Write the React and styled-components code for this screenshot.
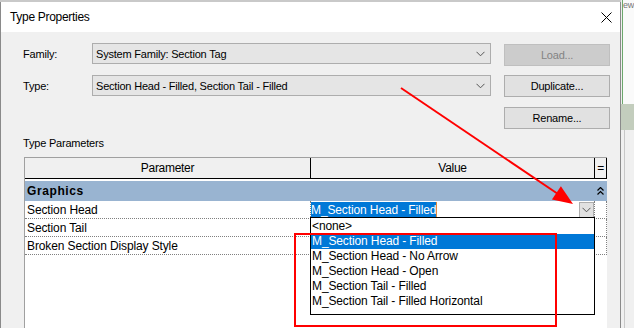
import styled, { createGlobalStyle } from 'styled-components';

const GlobalStyle = createGlobalStyle`
  html, body {
    margin: 0;
    padding: 0;
    background: #f0f0f0;
  }
  body {
    font-family: "Liberation Sans", Arial, sans-serif;
    font-size: 11px;
    letter-spacing: -0.2px;
    color: #000;
  }
`;

const Page = styled.div`
  position: relative;
  width: 634px;
  height: 328px;
  overflow: hidden;
  display: flex;
  background: #c9c9c9;
`;

const Dialog = styled.div`
  width: 622px;
  margin-top: 2px;
  box-sizing: border-box;
  border-left: 1px solid #8a8a8a;
  border-right: 1px solid #8a8a8a;
  display: flex;
  flex-direction: column;
`;

const TitleBar = styled.div`
  height: 30px;
  flex: none;
  background: #fff;
  display: flex;
  align-items: center;
  justify-content: space-between;
  padding: 0 8px 0 9px;
`;

const Title = styled.span`
  font-size: 12px;
  letter-spacing: -0.3px;
  color: #000;
`;

const Body = styled.div`
  flex: 1;
  background: #f0f0f0;
  padding: 11px 0 0 22px;
  display: flex;
  flex-direction: column;
`;

const FormGrid = styled.div`
  display: grid;
  grid-template-columns: 69px 412px 106px;
  grid-auto-rows: 22px;
  row-gap: 10px;
  align-items: center;
`;

const Label = styled.span`
  color: #000;
`;

const Combo = styled.div`
  width: 399px;
  height: 21px;
  box-sizing: border-box;
  border: 1px solid #adadad;
  background: #e5e5e5;
  display: flex;
  align-items: center;
  justify-content: space-between;
  padding: 0 5px 0 3px;
  align-self: start;
`;

const Button = styled.div`
  height: 22px;
  box-sizing: border-box;
  border: 1px solid ${(p) => (p.disabled ? '#bfbfbf' : '#adadad')};
  background: ${(p) => (p.disabled ? '#cccccc' : '#e1e1e1')};
  color: ${(p) => (p.disabled ? '#838383' : '#000')};
  display: flex;
  align-items: center;
  justify-content: center;
  margin-top: ${(p) => p.offset || 0}px;
`;

const SectionLabel = styled.div`
  margin-top: 7px;
  height: 14px;
  line-height: 14px;
`;

const Table = styled.div`
  position: relative;
  margin: 7px 0 0 1px;
  width: 583px;
  flex: 1;
  box-sizing: border-box;
  border-left: 1px solid #a0a0a0;
  border-top: 1px solid #a0a0a0;
  background: #fff;
  font-size: 12px;
  letter-spacing: -0.12px;
`;

const GridRow = styled.div`
  display: grid;
  grid-template-columns: 286px 284px 12px;
  height: ${(p) => p.h}px;
  box-sizing: border-box;
`;

const HeaderRow = styled(GridRow)`
  background: #f0f0f0;
  border-bottom: 1px solid #000;
  letter-spacing: -0.3px;
`;

const HeadCell = styled.div`
  border-right: 1px solid #000;
  display: flex;
  align-items: center;
  justify-content: center;
`;

const Band = styled(GridRow)`
  margin-top: 2px;
  background: #99b4d1;
  align-items: center;
`;

const BandTitle = styled.span`
  grid-column: 1 / 3;
  font-weight: bold;
  letter-spacing: 0.6px;
  padding-left: 2px;
`;

const IconCell = styled.div`
  display: flex;
  align-items: center;
  justify-content: center;
  height: 100%;
  padding-right: 2px;
`;

const ParamCell = styled.div`
  border-right: 1px dotted #808080;
  border-bottom: 1px dotted #808080;
  padding-left: 2px;
  display: flex;
  align-items: center;
`;

const ValueCell = styled.div`
  border-bottom: 1px dotted #808080;
  display: flex;
  align-items: center;
  justify-content: space-between;
  padding-right: 1px;
`;

const EqCell = styled.div`
  border-left: 1px dotted #808080;
  border-right: 1px dotted #808080;
  border-bottom: 1px dotted #808080;
  margin-left: -1px;
`;

const Selected = styled.span`
  background: #0078d7;
  color: #fff;
  height: 16px;
  line-height: 16px;
  border-right: 1px solid #e08a3c;
`;

const DropButton = styled.div`
  width: 15px;
  height: 16px;
  box-sizing: border-box;
  border: 1px solid #adadad;
  background: #e1e1e1;
  display: flex;
  align-items: center;
  justify-content: center;
`;

const List = styled.div`
  position: absolute;
  left: 285px;
  top: 59px;
  width: 285px;
  height: 98px;
  box-sizing: border-box;
  border: 1px solid #000;
  background: #fff;
  padding-top: 1px;
`;

const ListItem = styled.div`
  height: 15px;
  line-height: 15px;
  padding-left: 1px;
  background: ${(p) => (p.active ? '#0078d7' : 'transparent')};
  color: ${(p) => (p.active ? '#fff' : '#000')};
`;

const Backdrop = styled.div`
  flex: 1;
  display: flex;
  flex-direction: column;
  background: #f0f0f0;
`;

const BackTop = styled.div`
  height: 104px;
  background: #fafafa;
  border-left: 1px solid #6da86d;
  margin-left: 1px;
  font-size: 9px;
  color: #777;
  line-height: 9px;
  padding-top: 1px;
  box-sizing: border-box;
  overflow: hidden;
`;

const BackBand = styled.div`
  height: 26px;
  background: #c3cdbd;
`;

const BackRest = styled.div`
  flex: 1;
  border-left: 1px solid #c8c8c8;
  margin-left: 3px;
`;

const Overlay = styled.svg`
  position: absolute;
  left: 0;
  top: 0;
  pointer-events: none;
`;

function Chevron() {
  return (
    <svg width="9" height="6" viewBox="0 0 9 6">
      <path d="M0.5 0.8 L4.5 4.8 L8.5 0.8" fill="none" stroke="#555" strokeWidth="1" />
    </svg>
  );
}

function CloseIcon() {
  return (
    <svg width="11" height="11" viewBox="0 0 11 11">
      <path d="M0.5 0.5 L10.5 10.5 M10.5 0.5 L0.5 10.5" stroke="#000" strokeWidth="1" />
    </svg>
  );
}

function Collapse() {
  return (
    <svg width="7" height="8" viewBox="0 0 7 8">
      <path d="M0.5 3.5 L3.5 0.5 L6.5 3.5 M0.5 7.5 L3.5 4.5 L6.5 7.5" fill="none" stroke="#000" strokeWidth="1.2" />
    </svg>
  );
}

const options = [
  '<none>',
  'M_Section Head - Filled',
  'M_Section Head - No Arrow',
  'M_Section Head - Open',
  'M_Section Tail - Filled',
  'M_Section Tail - Filled Horizontal',
];

export default function App() {
  return (
    <Page>
      <GlobalStyle />
      <Dialog>
        <TitleBar>
          <Title>Type Properties</Title>
          <CloseIcon />
        </TitleBar>
        <Body>
          <FormGrid>
            <Label>Family:</Label>
            <Combo>
              <span>System Family: Section Tag</span>
              <Chevron />
            </Combo>
            <Button disabled offset={2}>Load...</Button>

            <Label>Type:</Label>
            <Combo>
              <span>Section Head - Filled, Section Tail - Filled</span>
              <Chevron />
            </Combo>
            <Button>Duplicate...</Button>

            <span />
            <span />
            <Button>Rename...</Button>
          </FormGrid>

          <SectionLabel>Type Parameters</SectionLabel>

          <Table>
            <HeaderRow h={21}>
              <HeadCell>Parameter</HeadCell>
              <HeadCell>Value</HeadCell>
              <HeadCell>=</HeadCell>
            </HeaderRow>
            <Band h={20}>
              <BandTitle>Graphics</BandTitle>
              <IconCell>
                <Collapse />
              </IconCell>
            </Band>
            <GridRow h={18}>
              <ParamCell>Section Head</ParamCell>
              <ValueCell>
                <Selected>M_Section Head - Filled</Selected>
                <DropButton>
                  <Chevron />
                </DropButton>
              </ValueCell>
              <EqCell />
            </GridRow>
            <GridRow h={18}>
              <ParamCell>Section Tail</ParamCell>
              <ValueCell />
              <EqCell />
            </GridRow>
            <GridRow h={18}>
              <ParamCell>Broken Section Display Style</ParamCell>
              <ValueCell />
              <EqCell />
            </GridRow>

            <List>
              {options.map((o, i) => (
                <ListItem key={o} active={i === 1}>
                  {o}
                </ListItem>
              ))}
            </List>
          </Table>
        </Body>
      </Dialog>
      <Backdrop>
        <BackTop>ew</BackTop>
        <BackBand />
        <BackRest />
      </Backdrop>

      {/* annotation drawn on top of the screenshot */}
      <Overlay width="634" height="328">
        <line x1="401" y1="88" x2="558" y2="194" stroke="#ff0000" strokeWidth="2" />
        <polygon points="573,204 551.9,199.4 560.9,186.2" fill="#ff0000" />
        <rect x="295" y="234" width="261" height="92" fill="none" stroke="#ff0000" strokeWidth="2" />
      </Overlay>
    </Page>
  );
}
